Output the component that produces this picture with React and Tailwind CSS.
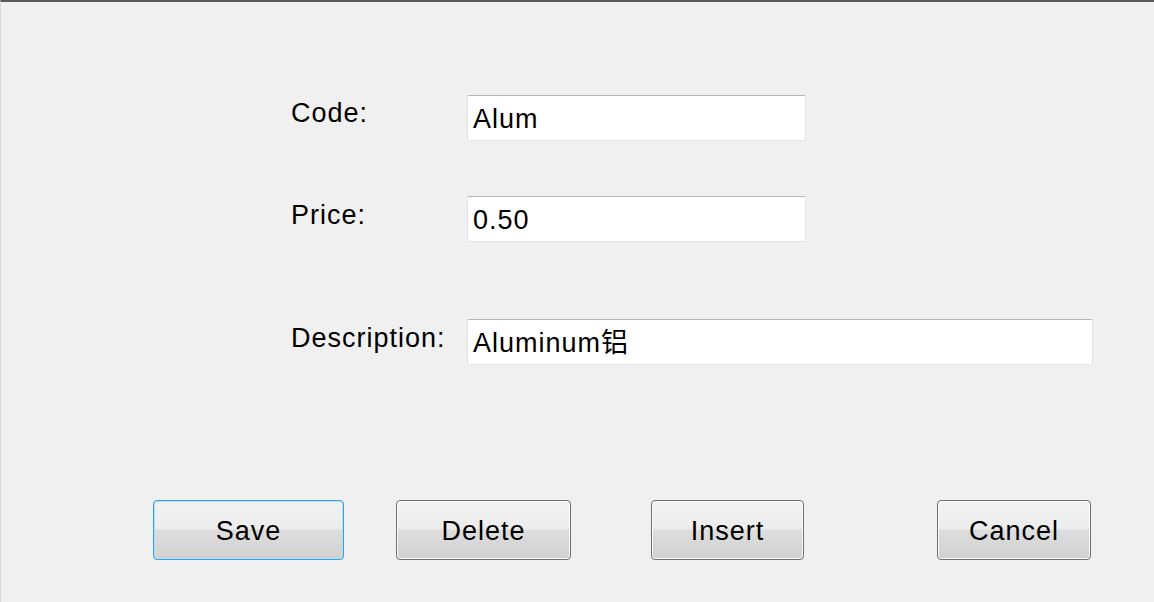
import React from 'react';

const font = { fontFamily: '"Liberation Sans", Arial, "Noto Sans CJK SC", sans-serif' };

const Field = ({ label, value, width, labelTop, className }) => (
    <div className={`flex items-start ${className}`}>
        <div className={`w-[176px] text-[27px] leading-[31px] tracking-[1px] text-black ${labelTop}`}>{label}</div>
        <div className={`${width} h-[46px] bg-white border border-[#e2e3ea] border-t-[#b3b6be] rounded-[2px] pl-[5px] pt-[5px] text-[27px] leading-[36px] tracking-[1px] text-black`}>
            {value}
        </div>
    </div>
);

const Btn = ({ children, w, active, className }) => (
    <button
        className={`${w} h-[60px] rounded-[4px] border text-[27px] tracking-[1px] text-black flex items-center justify-center pt-[2px] bg-[linear-gradient(to_bottom,#f3f3f3_0%,#ececec_48%,#dedede_50%,#d0d0d0_100%)] ${active ? 'border-[#3c9ee0] shadow-[inset_0_0_0_1px_#a8e2fb]' : 'border-[#707070] shadow-[inset_0_0_0_1px_#fafafa]'} ${className}`}
    >
        {children}
    </button>
);

export default function App() {
    return (
        <div style={font} className="w-[1154px] h-[602px] bg-[#f0f0f0] border-t-2 border-t-[#5a5a5a] border-l border-l-[#d9d9d9] overflow-hidden">
            {/* form fields */}
            <div className="pl-[290px] pt-[93px]">
                <Field label="Code:" value="Alum" width="w-[339px]" labelTop="mt-[3px]" />
                <Field label="Price:" value="0.50" width="w-[339px]" labelTop="mt-[4px]" className="mt-[55px]" />
                <Field label="Description:" value="Aluminum铝" width="w-[626px]" labelTop="mt-[4px]" className="mt-[77px]" />
            </div>

            {/* buttons */}
            <div className="flex pl-[152px] mt-[135px]">
                <Btn w="w-[191px]" active>Save</Btn>
                <Btn w="w-[175px]" className="ml-[52px]">Delete</Btn>
                <Btn w="w-[153px]" className="ml-[80px]">Insert</Btn>
                <Btn w="w-[154px]" className="ml-[133px]">Cancel</Btn>
            </div>
        </div>
    );
}
